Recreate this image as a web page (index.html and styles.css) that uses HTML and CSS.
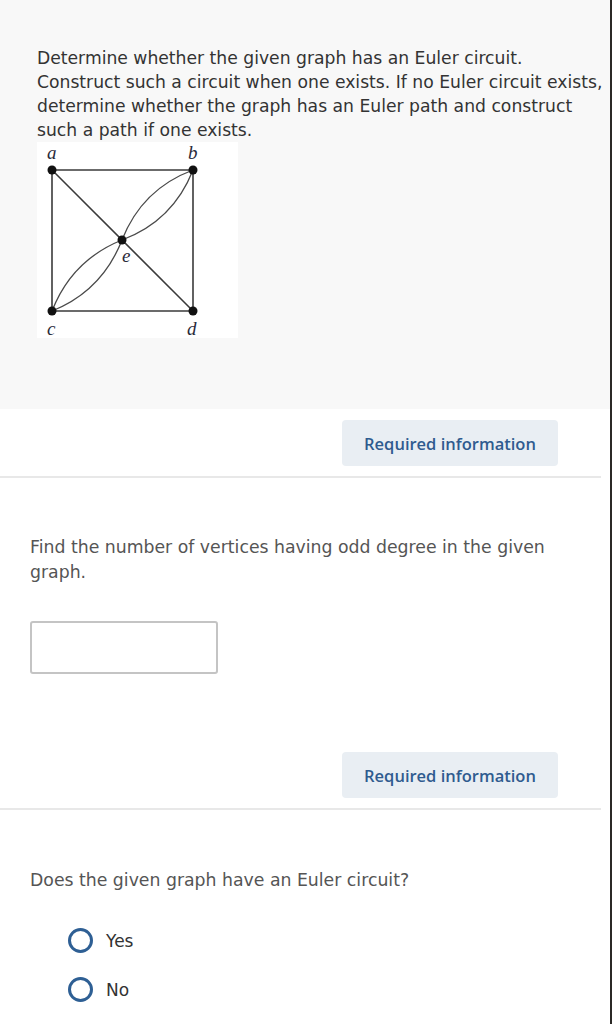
FILE: index.html
```html
<!DOCTYPE html>
<html>
<head>
<meta charset="utf-8">
<link rel="stylesheet" href="styles.css">
</head>
<body>
<div class="page">
  <section class="prompt">
    <p class="prompt-text">Determine whether the given graph has an Euler circuit.<br>Construct such a circuit when one exists. If no Euler circuit exists,<br>determine whether the graph has an Euler path and construct<br>such a path if one exists.</p>
    <div class="figure">
      <svg width="201" height="196" viewBox="0 0 201 196">
        <rect width="201" height="196" fill="#fff"/>
        <g stroke="#3a3a3a" stroke-width="1.6" fill="none">
          <line x1="15" y1="28" x2="156" y2="28"/>
          <line x1="15" y1="28" x2="15" y2="169"/>
          <line x1="156" y1="28" x2="156" y2="169"/>
          <line x1="15" y1="169" x2="156" y2="169"/>
          <line x1="15" y1="28" x2="156" y2="169"/>
        </g>
        <g stroke="#4a4a4a" stroke-width="1.3" fill="none">
          <path d="M85 98 Q136 79 156 28"/>
          <path d="M85 98 Q105 47 156 28"/>
          <path d="M15 169 Q65 149 85 98"/>
          <path d="M15 169 Q35 118 85 98"/>
        </g>
        <g fill="#111">
          <circle cx="15" cy="28" r="4.5"/>
          <circle cx="156" cy="28" r="4.5"/>
          <circle cx="15" cy="169" r="4.5"/>
          <circle cx="156" cy="169" r="4.5"/>
          <circle cx="85" cy="98" r="4.5"/>
        </g>
        <g class="lbl" fill="#2a2a3a">
          <text x="10" y="17">a</text>
          <text x="151" y="17">b</text>
          <text x="85" y="120">e</text>
          <text x="10" y="193">c</text>
          <text x="150" y="193">d</text>
        </g>
      </svg>
    </div>
  </section>

  <div class="info-row">
    <button class="info-btn">Required information</button>
  </div>

  <section class="question q1">
    <p class="q-text">Find the number of vertices having odd degree in the given<br>graph.</p>
    <div class="answer-box"></div>
  </section>

  <div class="info-row second">
    <button class="info-btn">Required information</button>
  </div>

  <section class="question q2">
    <p class="q-text">Does the given graph have an Euler circuit?</p>
    <ul class="options">
      <li class="option"><span class="radio"></span><span class="opt-label">Yes</span></li>
      <li class="option"><span class="radio"></span><span class="opt-label">No</span></li>
    </ul>
  </section>
</div>
</body>
</html>
```

FILE: styles.css
```css
* { box-sizing: border-box; }
html, body {
  margin: 0;
  padding: 0;
  background: #fff;
}
body {
  font-family: "DejaVu Sans", "Liberation Sans", sans-serif;
  color: #333;
}
.page {
  width: 612px;
  min-height: 1024px;
  border-right: 2px solid #2b2926;
  background: #fff;
  overflow: hidden;
}
.prompt {
  background: #f8f8f8;
  padding: 46px 0 71px 37px;
}
.prompt-text {
  margin: 0;
  font-size: 17.2px;
  line-height: 24px;
  color: #333;
  white-space: nowrap;
}
.figure {
  display: block;
  height: 196px;
}
.figure svg { display: block; }
.lbl text {
  font-family: "Liberation Serif", "DejaVu Serif", serif;
  font-style: italic;
  font-size: 19px;
}
.info-row {
  display: flex;
  justify-content: flex-end;
  width: 601px;
  padding: 11px 43px 10px 0;
  border-bottom: 2px solid #e8e8e8;
}
.info-btn {
  width: 216px;
  height: 46px;
  border: none;
  border-radius: 4px;
  background: #e9eef3;
  color: #2f5b8f;
  font-family: "Open Sans", "Liberation Sans", sans-serif;
  font-size: 16.5px;
  font-weight: 600;
  padding: 0;
}
.question {
  padding-left: 30px;
}
.q-text {
  margin: 0;
  font-size: 17.3px;
  line-height: 25px;
  color: #555;
  white-space: nowrap;
}
.q1 { padding-top: 57px; padding-bottom: 67px; }
.answer-box {
  margin-top: 36px;
  width: 188px;
  height: 53px;
  border: 2px solid #c4c4c4;
  border-radius: 3px;
  background: #fff;
}
.q2 { padding-top: 58px; }
.options {
  list-style: none;
  margin: 35px 0 0 0;
  padding: 0 0 0 38px;
  display: flex;
  flex-direction: column;
  gap: 24px;
}
.option {
  display: flex;
  align-items: center;
  gap: 13px;
  height: 25px;
}
.radio {
  width: 25px;
  height: 25px;
  border: 3px solid #2e5f94;
  border-radius: 50%;
  background: #fff;
}
.opt-label {
  font-size: 17px;
  color: #333;
}
```
